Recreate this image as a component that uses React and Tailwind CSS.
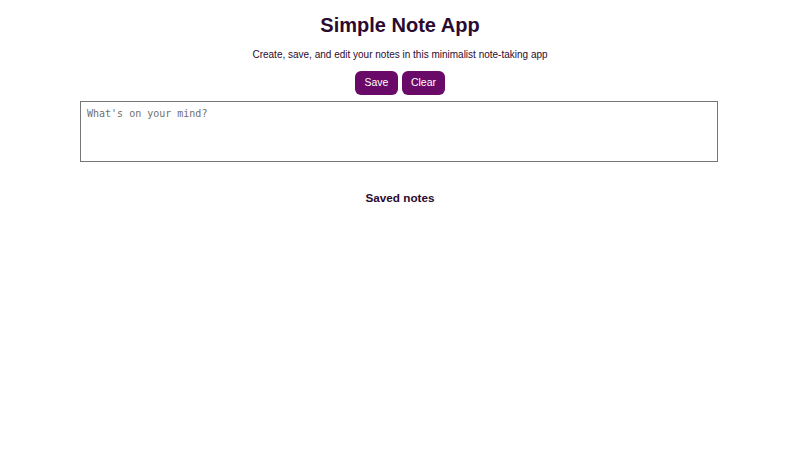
import React, { useState } from 'react';

const App = () => {
  const [text, setText] = useState('');
  const [notes, setNotes] = useState([]);

  const handleSave = () => {
    if (!text.trim()) return;
    setNotes([...notes, text]);
    setText('');
  };

  return (
    <div className="min-h-screen bg-white font-['Liberation_Sans',Arial,sans-serif] text-[#2b0a2f]">
      <div className="flex flex-col items-center pt-[11px]">
        <h1 className="text-[20px] font-bold leading-[28px]">Simple Note App</h1>
        <p className="mt-[9px] text-[10px] leading-[14px]">
          Create, save, and edit your notes in this minimalist note-taking app
        </p>
        <div className="mt-[9px] flex gap-[4px]">
          <button
            onClick={handleSave}
            className="h-[24px] w-[43px] rounded-[6px] bg-[#6a0a68] text-[10.5px] text-white"
          >
            Save
          </button>
          <button
            onClick={() => setText('')}
            className="h-[24px] w-[43px] rounded-[6px] bg-[#6a0a68] text-[10.5px] text-white"
          >
            Clear
          </button>
        </div>
        <textarea
          value={text}
          onChange={(e) => setText(e.target.value)}
          placeholder="What's on your mind?"
          className="mt-[6px] h-[61px] w-[638px] -translate-x-px resize-none border border-[#767676] px-[6px] py-[6px] font-['DejaVu_Sans_Mono',monospace] text-[10px] leading-[12px] text-black placeholder:text-[#6f6f6f] outline-none"
        />
        <h2 className="mt-[29px] text-[11.7px] font-bold leading-[14px]">Saved notes</h2>
        <div className="mt-2 flex flex-col gap-2">
          {notes.map((note, i) => (
            <div key={i} className="text-[10px]">{note}</div>
          ))}
        </div>
      </div>
    </div>
  );
};

export default App;
